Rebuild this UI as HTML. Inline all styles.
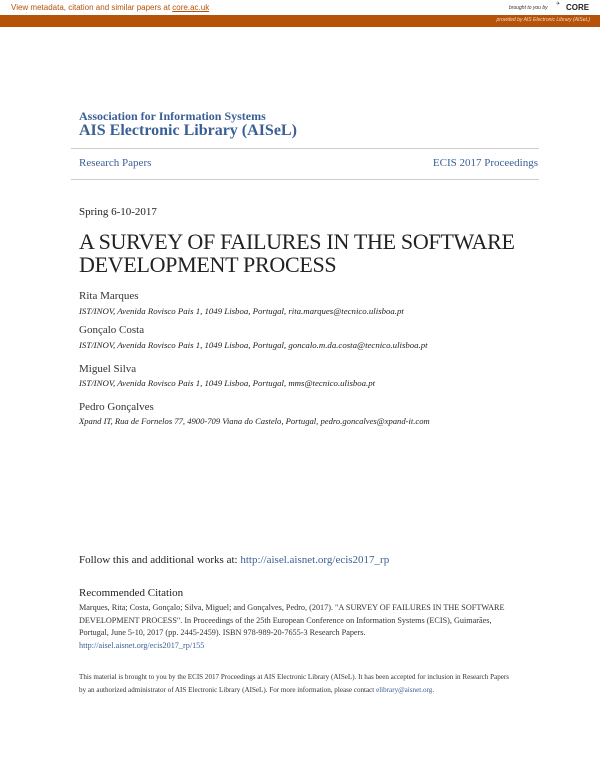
<!DOCTYPE html>
<html><head><meta charset="utf-8"><style>
body{margin:0;width:600px;height:776px;background:#fff;position:relative;font-family:"Liberation Serif",serif;color:#222;overflow:hidden}
.a{position:absolute;white-space:nowrap}
.b{color:#3a5f95}
</style></head><body>
<div class="a" style="left:11px;top:3px;font:8px 'Liberation Sans',sans-serif;color:#b5530a">View metadata, citation and similar papers at <u>core.ac.uk</u></div>
<div class="a" style="left:509px;top:5px;font:italic 5px 'Liberation Sans',sans-serif;color:#333">brought to you by</div>
<div class="a" style="left:556px;top:1px;font:5px sans-serif;color:#333">✈</div>
<div class="a" style="left:566px;top:3px;font:bold 8px 'Liberation Sans',sans-serif;color:#222">CORE</div>
<div class="a" style="left:0;top:15px;width:600px;height:12px;background:#b5530a"></div>
<div class="a" style="right:10px;top:17px;font:italic 5px 'Liberation Sans',sans-serif;color:#f3d9c0">provided by AIS Electronic Library (AISeL)</div>
<div class="a b" style="left:79px;top:109px;font:bold 12px/14px 'Liberation Serif',serif">Association for Information Systems</div>
<div class="a b" style="left:79px;top:122px;font:bold 16px/18px 'Liberation Serif',serif">AIS Electronic Library (AISeL)</div>
<div class="a" style="left:71px;top:148px;width:468px;height:1px;background:#ccc"></div>
<div class="a b" style="left:79px;top:157px;font:11px 'Liberation Serif',serif">Research Papers</div>
<div class="a b" style="right:62px;top:157px;font:11px 'Liberation Serif',serif">ECIS 2017 Proceedings</div>
<div class="a" style="left:71px;top:179px;width:468px;height:1px;background:#ccc"></div>
<div class="a" style="left:79px;top:206px;font:11px 'Liberation Serif',serif">Spring 6-10-2017</div>
<div class="a" style="left:79px;top:230px;font:22px/23px 'Liberation Serif',serif;letter-spacing:-0.3px">A SURVEY OF FAILURES IN THE SOFTWARE<br>DEVELOPMENT PROCESS</div>
<div class="a" style="left:79px;top:290px;font:11px 'Liberation Serif',serif;color:#333">Rita Marques</div>
<div class="a" style="left:79px;top:306px;font:italic 8.8px 'Liberation Serif',serif">IST/INOV, Avenida Rovisco Pais 1, 1049 Lisboa, Portugal, rita.marques@tecnico.ulisboa.pt</div>
<div class="a" style="left:79px;top:324px;font:11px 'Liberation Serif',serif;color:#333">Gonçalo Costa</div>
<div class="a" style="left:79px;top:340px;font:italic 8.8px 'Liberation Serif',serif">IST/INOV, Avenida Rovisco Pais 1, 1049 Lisboa, Portugal, goncalo.m.da.costa@tecnico.ulisboa.pt</div>
<div class="a" style="left:79px;top:363px;font:11px 'Liberation Serif',serif;color:#333">Miguel Silva</div>
<div class="a" style="left:79px;top:378px;font:italic 8.8px 'Liberation Serif',serif">IST/INOV, Avenida Rovisco Pais 1, 1049 Lisboa, Portugal, mms@tecnico.ulisboa.pt</div>
<div class="a" style="left:79px;top:401px;font:11px 'Liberation Serif',serif;color:#333">Pedro Gonçalves</div>
<div class="a" style="left:79px;top:416px;font:italic 8.6px 'Liberation Serif',serif">Xpand IT, Rua de Fornelos 77, 4900-709 Viana do Castelo, Portugal, pedro.goncalves@xpand-it.com</div>
<div class="a" style="left:79px;top:554px;font:11px 'Liberation Serif',serif">Follow this and additional works at: <span class="b">http://aisel.aisnet.org/ecis2017_rp</span></div>
<div class="a" style="left:79px;top:587px;font:11px 'Liberation Serif',serif">Recommended Citation</div>
<div class="a" style="left:79px;top:602px;font:8.2px/12.5px 'Liberation Serif',serif;color:#333">Marques, Rita; Costa, Gonçalo; Silva, Miguel; and Gonçalves, Pedro, (2017). "A SURVEY OF FAILURES IN THE SOFTWARE<br>DEVELOPMENT PROCESS". In Proceedings of the 25th European Conference on Information Systems (ECIS), Guimarães,<br>Portugal, June 5-10, 2017 (pp. 2445-2459). ISBN 978-989-20-7655-3 Research Papers.<br><span class="b">http://aisel.aisnet.org/ecis2017_rp/155</span></div>
<div class="a" style="left:79px;top:671px;font:7.1px/12.5px 'Liberation Serif',serif;color:#333">This material is brought to you by the ECIS 2017 Proceedings at AIS Electronic Library (AISeL). It has been accepted for inclusion in Research Papers<br>by an authorized administrator of AIS Electronic Library (AISeL). For more information, please contact <span class="b">elibrary@aisnet.org</span>.</div>
</body></html>
